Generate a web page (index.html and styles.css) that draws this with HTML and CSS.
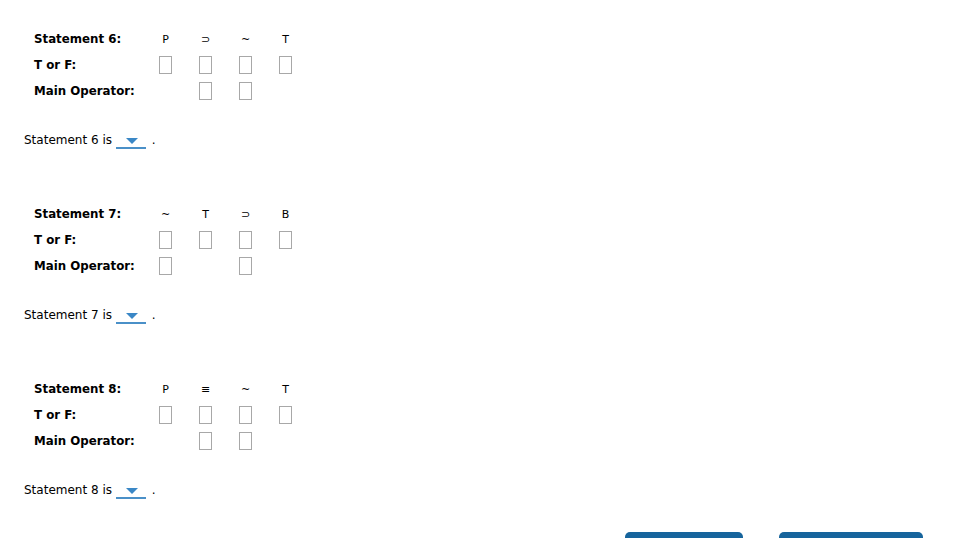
FILE: index.html
```html
<!DOCTYPE html>
<html>
<head>
<meta charset="utf-8">
<link rel="stylesheet" href="styles.css">
</head>
<body>
<div class="page">
  <div class="block">
    <div class="table">
      <div class="label">Statement 6:</div>
      <div class="sym">P</div><div class="sym">⊃</div><div class="sym">~</div><div class="sym">T</div>
      <div class="label">T or F:</div>
      <div class="cell"><span class="box"></span></div><div class="cell"><span class="box"></span></div><div class="cell"><span class="box"></span></div><div class="cell"><span class="box"></span></div>
      <div class="label">Main Operator:</div>
      <div class="cell"></div><div class="cell"><span class="box"></span></div><div class="cell"><span class="box"></span></div><div class="cell"></div>
    </div>
    <div class="sentence">Statement 6 is <span class="select"><span class="tri"></span></span> .</div>
  </div>

  <div class="block">
    <div class="table">
      <div class="label">Statement 7:</div>
      <div class="sym">~</div><div class="sym">T</div><div class="sym">⊃</div><div class="sym">B</div>
      <div class="label">T or F:</div>
      <div class="cell"><span class="box"></span></div><div class="cell"><span class="box"></span></div><div class="cell"><span class="box"></span></div><div class="cell"><span class="box"></span></div>
      <div class="label">Main Operator:</div>
      <div class="cell"><span class="box"></span></div><div class="cell"></div><div class="cell"><span class="box"></span></div><div class="cell"></div>
    </div>
    <div class="sentence">Statement 7 is <span class="select"><span class="tri"></span></span> .</div>
  </div>

  <div class="block">
    <div class="table">
      <div class="label">Statement 8:</div>
      <div class="sym">P</div><div class="sym">≡</div><div class="sym">~</div><div class="sym">T</div>
      <div class="label">T or F:</div>
      <div class="cell"><span class="box"></span></div><div class="cell"><span class="box"></span></div><div class="cell"><span class="box"></span></div><div class="cell"><span class="box"></span></div>
      <div class="label">Main Operator:</div>
      <div class="cell"></div><div class="cell"><span class="box"></span></div><div class="cell"><span class="box"></span></div><div class="cell"></div>
    </div>
    <div class="sentence">Statement 8 is <span class="select"><span class="tri"></span></span> .</div>
  </div>

  <div class="buttons">
    <div class="btn btn-a"></div>
    <div class="btn btn-b"></div>
  </div>
</div>
</body>
</html>
```

FILE: styles.css
```css
html, body {
  margin: 0;
  padding: 0;
  background: #ffffff;
  overflow: hidden;
}

.page {
  font-family: "DejaVu Sans", Verdana, sans-serif;
  color: #000;
  padding-top: 26px;
}

.block {
  margin-bottom: 51px;
}

.table {
  display: grid;
  grid-template-columns: 111.5px 40px 40px 40px 40px;
  grid-auto-rows: 26px;
  padding-left: 34px;
  align-items: center;
}

.label {
  font-weight: bold;
  font-size: 11.8px;
  white-space: nowrap;
}

.sym {
  font-size: 11px;
  text-align: center;
}

.cell {
  display: flex;
  justify-content: center;
  align-items: center;
}

.box {
  display: block;
  width: 11px;
  height: 16px;
  border: 1px solid #a8a8a8;
  background: #fff;
}

.sentence {
  margin-top: 26px;
  height: 20px;
  line-height: 20px;
  padding-left: 24px;
  font-size: 12px;
  white-space: nowrap;
}

.select {
  display: inline-block;
  position: relative;
  width: 30px;
  height: 14px;
  vertical-align: -5px;
  border-bottom: 2px solid #4a90c8;
  margin-right: 2px;
}

.tri {
  position: absolute;
  left: 10px;
  top: 5px;
  width: 0;
  height: 0;
  border-left: 6px solid transparent;
  border-right: 6px solid transparent;
  border-top: 6px solid #3a87c6;
}

.buttons {
  display: flex;
  justify-content: flex-end;
  gap: 36px;
  padding-right: 31px;
  margin-top: -19px;
}

.btn {
  height: 36px;
  background: #16649c;
  border-radius: 5px;
}

.btn-a { width: 118px; }
.btn-b { width: 144px; }
```
